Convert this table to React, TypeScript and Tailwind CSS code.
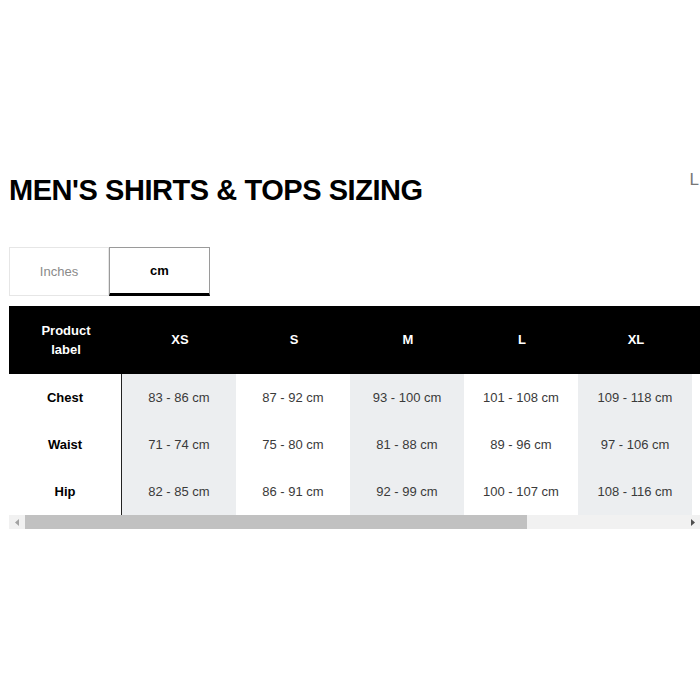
import React from "react"

type SizeRow = { label: string; values: string[] }

const SIZES = ["XS", "S", "M", "L", "XL"]

const ROWS: SizeRow[] = [
  { label: "Chest", values: ["83 - 86 cm", "87 - 92 cm", "93 - 100 cm", "101 - 108 cm", "109 - 118 cm"] },
  { label: "Waist", values: ["71 - 74 cm", "75 - 80 cm", "81 - 88 cm", "89 - 96 cm", "97 - 106 cm"] },
  { label: "Hip", values: ["82 - 85 cm", "86 - 91 cm", "92 - 99 cm", "100 - 107 cm", "108 - 116 cm"] },
]

export default function App() {
  return (
    <div className="w-[700px] h-[700px] overflow-hidden bg-white pl-[9px] font-['Liberation_Sans',Arial,sans-serif]">
      {/* Title row with clipped neighbour on the right */}
      <div className="flex items-start pt-[172px]">
        <h1 className="text-[29px] leading-[36px] font-bold text-black tracking-[-0.45px] whitespace-nowrap">
          MEN'S SHIRTS &amp; TOPS SIZING
        </h1>
        <span className="ml-auto -mt-[1px] mr-[1px] text-[17px] leading-[18px] text-[#777] font-light">L</span>
      </div>

      {/* Unit toggle */}
      <div className="flex mt-[39px]">
        <button className="w-[100px] h-[49px] border border-[#e6e6e6] text-[13px] text-[#8a8a8a]">Inches</button>
        <button className="w-[101px] h-[49px] border border-[#9a9a9a] border-b-[3px] border-b-black text-[13px] font-bold text-black">
          cm
        </button>
      </div>

      {/* Table */}
      <div className="mt-[10px] w-[900px]">
        <div className="flex h-[68px] bg-black text-white text-[13px] font-bold">
          <div className="w-[114px] flex items-center justify-center text-center leading-[19px]">
            Product
            <br />
            label
          </div>
          {SIZES.map((s) => (
            <div key={s} className="w-[114px] flex items-center justify-center">
              {s}
            </div>
          ))}
        </div>
        <div className="flex">
          <div className="w-[113px] border-r border-[#222]">
            {ROWS.map((r) => (
              <div key={r.label} className="h-[47px] flex items-center justify-center text-[13px] font-bold text-black">
                {r.label}
              </div>
            ))}
          </div>
          {SIZES.map((s, i) => (
            <div key={s} className={i % 2 === 0 ? "w-[114px] bg-[#eceef0]" : "w-[114px] bg-white"}>
              {ROWS.map((r) => (
                <div key={r.label} className="h-[47px] flex items-center justify-center text-[13px] text-[#3a3a3a]">
                  {r.values[i]}
                </div>
              ))}
            </div>
          ))}
          <div className="w-[114px] bg-white" />
        </div>
      </div>

      {/* Scrollbar */}
      <div className="flex h-[14px] w-[691px] bg-[#f1f1f1] items-center">
        <div className="w-[16px] h-full flex items-center justify-center">
          <svg width="4" height="7" viewBox="0 0 4 7">
            <path d="M4 0 L0 3.5 L4 7 Z" fill="#a3a3a3" />
          </svg>
        </div>
        <div className="w-[502px] h-full bg-[#c1c1c1]" />
        <div className="flex-1" />
        <div className="w-[14px] h-full flex items-center justify-center">
          <svg width="4" height="7" viewBox="0 0 4 7">
            <path d="M0 0 L4 3.5 L0 7 Z" fill="#505050" />
          </svg>
        </div>
      </div>
    </div>
  )
}
